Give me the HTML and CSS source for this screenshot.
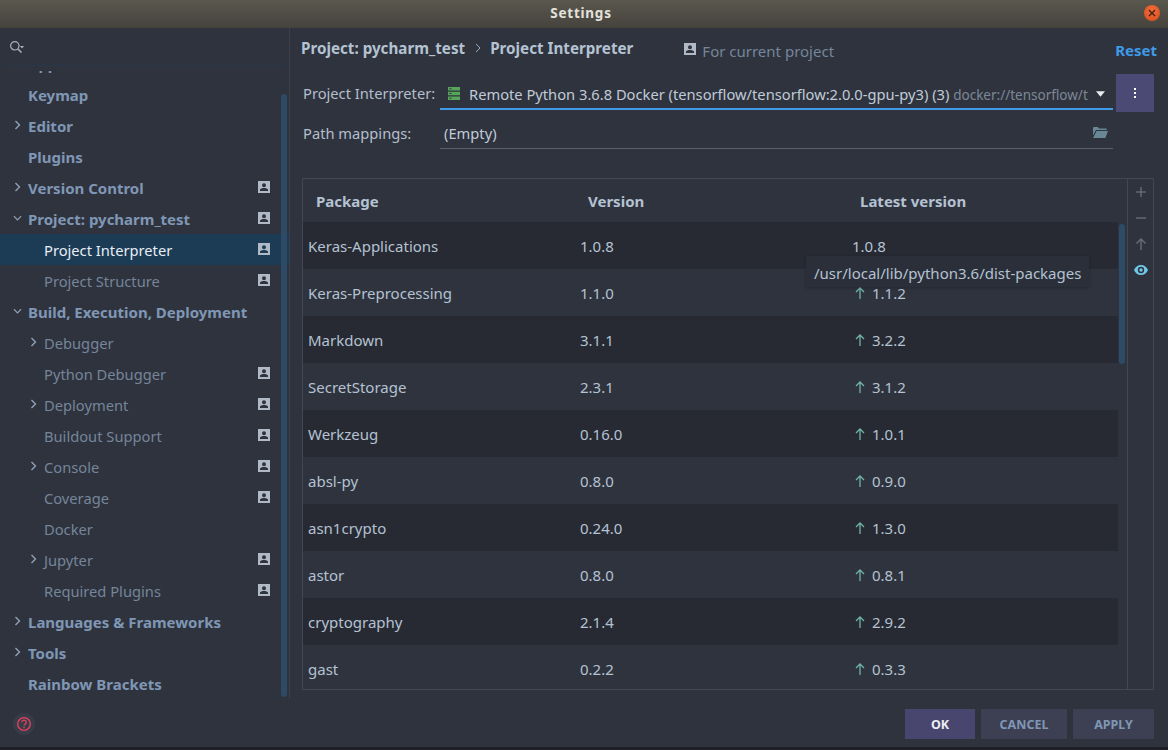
FILE: index.html
```html
<!DOCTYPE html>
<html lang="en">
<head>
<meta charset="utf-8">
<title>Settings</title>
<link rel="stylesheet" href="styles.css">
</head>
<body>
<div class="window">
  <header class="titlebar">
    <span class="title">Settings</span>
    <span class="close"><svg width="10" height="10" viewBox="0 0 10 10"><path d="M2 2l6 6M8 2l-6 6" stroke="#4a2412" stroke-width="1.5"/></svg></span>
  </header>
  <div class="main">
    <aside class="sidebar">
      <div class="search">
        <svg width="14" height="14" viewBox="0 0 14 14"><circle cx="4.800" cy="4.800" r="4.200" fill="none" stroke="#a9b4c2" stroke-width="1.200"/><path d="M8 8l3.500 3.500" stroke="#a9b4c2" stroke-width="1.500"/><path d="M10 5h4l-2 2.400z" fill="#a9b4c2"/></svg>
      </div>
      <div class="tree-wrap">
        <div class="tree">
          <div class="node top clipped">Appearance &amp; Behavior</div>
          <div class="node top">Keymap</div>
          <div class="node top"><svg class="chev" viewBox="0 0 8 10"><path d="M2 1l4 4-4 4" /></svg>Editor</div>
          <div class="node top">Plugins</div>
          <div class="node top"><svg class="chev" viewBox="0 0 8 10"><path d="M2 1l4 4-4 4" /></svg>Version Control<svg class="badge" viewBox="0 0 12 12"><path fill-rule="evenodd" d="M0 0h12v12H0zM6 2.200a2 2 0 1 0 0 4 2 2 0 0 0 0-4zM2 10h8V8.600C10 7.600 7.500 7 6 7s-4 .6-4 1.600z"/></svg></div>
          <div class="node top"><svg class="chev" viewBox="0 0 10 8"><path d="M1 2l4 4 4-4" /></svg>Project: pycharm_test<svg class="badge" viewBox="0 0 12 12"><path fill-rule="evenodd" d="M0 0h12v12H0zM6 2.200a2 2 0 1 0 0 4 2 2 0 0 0 0-4zM2 10h8V8.600C10 7.600 7.500 7 6 7s-4 .6-4 1.600z"/></svg></div>
          <div class="node sub selected">Project Interpreter<svg class="badge" viewBox="0 0 12 12"><path fill-rule="evenodd" d="M0 0h12v12H0zM6 2.200a2 2 0 1 0 0 4 2 2 0 0 0 0-4zM2 10h8V8.600C10 7.600 7.500 7 6 7s-4 .6-4 1.600z"/></svg></div>
          <div class="node sub">Project Structure<svg class="badge" viewBox="0 0 12 12"><path fill-rule="evenodd" d="M0 0h12v12H0zM6 2.200a2 2 0 1 0 0 4 2 2 0 0 0 0-4zM2 10h8V8.600C10 7.600 7.500 7 6 7s-4 .6-4 1.600z"/></svg></div>
          <div class="node top"><svg class="chev" viewBox="0 0 10 8"><path d="M1 2l4 4 4-4" /></svg>Build, Execution, Deployment</div>
          <div class="node sub"><svg class="chev" viewBox="0 0 8 10"><path d="M2 1l4 4-4 4" /></svg>Debugger</div>
          <div class="node sub">Python Debugger<svg class="badge" viewBox="0 0 12 12"><path fill-rule="evenodd" d="M0 0h12v12H0zM6 2.200a2 2 0 1 0 0 4 2 2 0 0 0 0-4zM2 10h8V8.600C10 7.600 7.500 7 6 7s-4 .6-4 1.600z"/></svg></div>
          <div class="node sub"><svg class="chev" viewBox="0 0 8 10"><path d="M2 1l4 4-4 4" /></svg>Deployment<svg class="badge" viewBox="0 0 12 12"><path fill-rule="evenodd" d="M0 0h12v12H0zM6 2.200a2 2 0 1 0 0 4 2 2 0 0 0 0-4zM2 10h8V8.600C10 7.600 7.500 7 6 7s-4 .6-4 1.600z"/></svg></div>
          <div class="node sub">Buildout Support<svg class="badge" viewBox="0 0 12 12"><path fill-rule="evenodd" d="M0 0h12v12H0zM6 2.200a2 2 0 1 0 0 4 2 2 0 0 0 0-4zM2 10h8V8.600C10 7.600 7.500 7 6 7s-4 .6-4 1.600z"/></svg></div>
          <div class="node sub"><svg class="chev" viewBox="0 0 8 10"><path d="M2 1l4 4-4 4" /></svg>Console<svg class="badge" viewBox="0 0 12 12"><path fill-rule="evenodd" d="M0 0h12v12H0zM6 2.200a2 2 0 1 0 0 4 2 2 0 0 0 0-4zM2 10h8V8.600C10 7.600 7.500 7 6 7s-4 .6-4 1.600z"/></svg></div>
          <div class="node sub">Coverage<svg class="badge" viewBox="0 0 12 12"><path fill-rule="evenodd" d="M0 0h12v12H0zM6 2.200a2 2 0 1 0 0 4 2 2 0 0 0 0-4zM2 10h8V8.600C10 7.600 7.500 7 6 7s-4 .6-4 1.600z"/></svg></div>
          <div class="node sub">Docker</div>
          <div class="node sub"><svg class="chev" viewBox="0 0 8 10"><path d="M2 1l4 4-4 4" /></svg>Jupyter<svg class="badge" viewBox="0 0 12 12"><path fill-rule="evenodd" d="M0 0h12v12H0zM6 2.200a2 2 0 1 0 0 4 2 2 0 0 0 0-4zM2 10h8V8.600C10 7.600 7.500 7 6 7s-4 .6-4 1.600z"/></svg></div>
          <div class="node sub">Required Plugins<svg class="badge" viewBox="0 0 12 12"><path fill-rule="evenodd" d="M0 0h12v12H0zM6 2.200a2 2 0 1 0 0 4 2 2 0 0 0 0-4zM2 10h8V8.600C10 7.600 7.500 7 6 7s-4 .6-4 1.600z"/></svg></div>
          <div class="node top"><svg class="chev" viewBox="0 0 8 10"><path d="M2 1l4 4-4 4" /></svg>Languages &amp; Frameworks</div>
          <div class="node top"><svg class="chev" viewBox="0 0 8 10"><path d="M2 1l4 4-4 4" /></svg>Tools</div>
          <div class="node top">Rainbow Brackets</div>
        </div>
        <div class="side-thumb"></div>
      </div>
    </aside>
    <section class="content">
      <div class="crumbs">
        <span class="crumb">Project: pycharm_test</span>
        <svg class="crumb-sep" viewBox="0 0 6 10"><path d="M1 1l4 4-4 4"/></svg>
        <span class="crumb">Project Interpreter</span>
        <span class="scope"><svg class="scope-ico" viewBox="0 0 12 12"><path fill-rule="evenodd" d="M0 0h12v12H0zM6 2.200a2 2 0 1 0 0 4 2 2 0 0 0 0-4zM2 10h8V8.600C10 7.600 7.500 7 6 7s-4 .6-4 1.600z"/></svg>For current project</span>
        <span class="reset">Reset</span>
      </div>
      <div class="form-row first">
        <label class="lbl">Project Interpreter:</label>
        <div class="combo focused">
          <svg class="server" viewBox="0 0 12 13"><path fill="#57a55a" d="M0 0h12v3.400H0zM0 4.800h12v3.400H0zM0 9.600h12V13H0z"/><path fill="#2f343f" d="M1.500 1.200h2v1h-2zM1.500 6h2v1h-2zM1.500 10.800h2v1h-2z"/></svg>
          <span class="combo-text">Remote Python 3.6.8 Docker (tensorflow/tensorflow:2.0.0-gpu-py3) (3) <span class="muted">docker://tensorflow/tensorflow:2.0.0-gpu-py3</span></span>
          <svg class="caret" viewBox="0 0 10 6"><path d="M0 0h10L5 6z"/></svg>
        </div>
        <button class="more"><svg width="4" height="12" viewBox="0 0 4 12"><path fill="#fff" d="M1 1h2v2H1zM1 5h2v2H1zM1 9h2v2H1z"/></svg></button>
      </div>
      <div class="form-row second">
        <label class="lbl">Path mappings:</label>
        <div class="combo">
          <span class="combo-text">(Empty)</span>
          <svg class="folder" viewBox="0 0 15 11"><path fill="#6a8795" d="M0 1.200C0 .5.500 0 1.200 0h3.600l1.400 1.500h6.600c.6 0 1 .4 1 1V3H3L0 8.500z"/><path fill="#6a8795" d="M3.600 4H15l-2.600 7H0z"/></svg>
        </div>
      </div>
      <div class="table-box">
        <div class="table">
          <div class="thead"><span class="c1">Package</span><span class="c2">Version</span><span class="c3">Latest version</span></div>
          <div class="rows">
            <div class="row dark"><span class="c1">Keras-Applications</span><span class="c2">1.0.8</span><span class="c3">1.0.8</span></div>
            <div class="row"><span class="c1">Keras-Preprocessing</span><span class="c2">1.1.0</span><span class="c3"><svg class="up" viewBox="0 0 10 12"><path d="M5 12V1M1 5l4-4 4 4"/></svg>1.1.2</span></div>
            <div class="row dark"><span class="c1">Markdown</span><span class="c2">3.1.1</span><span class="c3"><svg class="up" viewBox="0 0 10 12"><path d="M5 12V1M1 5l4-4 4 4"/></svg>3.2.2</span></div>
            <div class="row"><span class="c1">SecretStorage</span><span class="c2">2.3.1</span><span class="c3"><svg class="up" viewBox="0 0 10 12"><path d="M5 12V1M1 5l4-4 4 4"/></svg>3.1.2</span></div>
            <div class="row dark"><span class="c1">Werkzeug</span><span class="c2">0.16.0</span><span class="c3"><svg class="up" viewBox="0 0 10 12"><path d="M5 12V1M1 5l4-4 4 4"/></svg>1.0.1</span></div>
            <div class="row"><span class="c1">absl-py</span><span class="c2">0.8.0</span><span class="c3"><svg class="up" viewBox="0 0 10 12"><path d="M5 12V1M1 5l4-4 4 4"/></svg>0.9.0</span></div>
            <div class="row dark"><span class="c1">asn1crypto</span><span class="c2">0.24.0</span><span class="c3"><svg class="up" viewBox="0 0 10 12"><path d="M5 12V1M1 5l4-4 4 4"/></svg>1.3.0</span></div>
            <div class="row"><span class="c1">astor</span><span class="c2">0.8.0</span><span class="c3"><svg class="up" viewBox="0 0 10 12"><path d="M5 12V1M1 5l4-4 4 4"/></svg>0.8.1</span></div>
            <div class="row dark"><span class="c1">cryptography</span><span class="c2">2.1.4</span><span class="c3"><svg class="up" viewBox="0 0 10 12"><path d="M5 12V1M1 5l4-4 4 4"/></svg>2.9.2</span></div>
            <div class="row"><span class="c1">gast</span><span class="c2">0.2.2</span><span class="c3"><svg class="up" viewBox="0 0 10 12"><path d="M5 12V1M1 5l4-4 4 4"/></svg>0.3.3</span></div>
          </div>
          <div class="thumb"></div>
          <div class="tooltip">/usr/local/lib/python3.6/dist-packages</div>
        </div>
        <div class="tools">
          <svg class="tool" viewBox="0 0 12 12"><path d="M6 1v10M1 6h10"/></svg>
          <svg class="tool" viewBox="0 0 12 12"><path d="M1 6h10"/></svg>
          <svg class="tool" viewBox="0 0 12 12"><path d="M6 12V1M1.500 5.500L6 1l4.500 4.500"/></svg>
          <svg class="tool eye" viewBox="0 0 14 10"><path fill-rule="evenodd" d="M7 0c3.200 0 5.800 2 7 5-1.200 3-3.800 5-7 5S1.200 8 0 5c1.200-3 3.800-5 7-5zm0 1.800a3.200 3.200 0 1 0 0 6.400 3.200 3.200 0 0 0 0-6.400z"/><circle cx="7" cy="5" r="1.700"/></svg>
        </div>
      </div>
    </section>
  </div>
  <footer class="footer">
    <span class="help"><svg width="16" height="16" viewBox="0 0 16 16"><circle cx="8" cy="8" r="6.300" fill="none" stroke="#e8415f" stroke-width="1.300"/><path d="M5.800 6.300a2.200 2.200 0 1 1 3.300 1.900c-.8.500-1.100.9-1.100 1.600" fill="none" stroke="#e8415f" stroke-width="1.300"/><path d="M7.300 10.800h1.400v1.400H7.300z" fill="#e8415f"/></svg></span>
    <button class="btn primary">OK</button>
    <button class="btn wide">CANCEL</button>
    <button class="btn">APPLY</button>
  </footer>
</div>
</body>
</html>
```
FILE: styles.css
```css
* { box-sizing: border-box; }
html, body { margin: 0; padding: 0; }
body { width: 1168px; height: 750px; overflow: hidden; background: #1d1f25; font-family: "Noto Sans", sans-serif; font-size: 15px; color: #b4bfcd; }
.window { width: 1168px; height: 747px; background: #2f333e; display: flex; flex-direction: column; }
.titlebar { height: 28px; flex: none; background: linear-gradient(#5a574e, #45433d); display: flex; align-items: center; justify-content: center; position: relative; padding: 0 6px 2px 0; }
.title { font-weight: 700; font-size: 13.500px; color: #e4e2dc; letter-spacing: 0.75px; }
.close { position: absolute; left: 1144px; top: 5px; width: 16px; height: 16px; border-radius: 50%; background: radial-gradient(circle at 50% 35%, #f0703a, #d9481a); display: flex; align-items: center; justify-content: center; }
.main { flex: none; height: 671px; display: flex; }
.sidebar { width: 290px; flex: none; border-right: 1px solid #3b404c; height: 671px; display: flex; flex-direction: column; }
.search { height: 38px; margin: 0 5px; padding: 13px 0 0 5px; border-bottom: 1px solid #26384a; flex: none; }
.search svg { display: block; }
.tree-wrap { position: relative; flex: 1; overflow: hidden; margin-top: 5px; }
.tree { margin-top: -23px; }
.node { height: 31px; display: flex; align-items: center; position: relative; white-space: nowrap; font-size: 14.700px; }
.node.top { padding-left: 28px; font-weight: 700; font-size: 15px; color: #7f97b5; }
.node.sub { padding-left: 44px; color: #75859a; }
.node.selected { background: #1c3b54; color: #e8eef4; }
.chev { position: absolute; left: 13px; top: 10px; width: 9px; height: 10px; fill: none; stroke: #93a4ba; stroke-width: 1.300; }
.sub .chev { left: 29px; }
.badge { position: absolute; left: 258px; top: 9px; width: 12px; height: 12px; fill: #b0bac6; }
.side-thumb { position: absolute; left: 281px; top: 23px; width: 6px; bottom: 2px; background: #2d4a66; border-radius: 3px; }
.content { flex: 1; min-width: 0; padding: 0 14px 0 11px; display: flex; flex-direction: column; }
.crumbs { height: 48px; flex: none; display: flex; align-items: center; position: relative; padding-bottom: 8px; }
.crumb { font-weight: 700; font-size: 15.200px; color: #b4c2d2; }
.crumb-sep { width: 6px; height: 10px; margin: 0 9px 0 10px; fill: none; stroke: #a0abba; stroke-width: 1; }
.scope { margin-left: 51px; display: flex; align-items: center; color: #75859a; font-size: 15px; position: relative; top: 3px; }
.scope-ico { width: 12px; height: 12px; fill: #b0bac6; margin-right: 6px; position: relative; top: -2px; }
.reset { position: absolute; right: -3px; top: 12px; color: #3f9ae8; font-weight: 700; font-size: 15px; }
.form-row { display: flex; align-items: stretch; flex: none; }
.form-row.first { height: 34px; }
.form-row.second { height: 39px; }
.lbl { width: 139px; padding-left: 2px; flex: none; color: #b4bfcd; font-size: 14.700px; display: flex; align-items: center; }
.second .lbl { padding-top: 7px; }
.combo { width: 673px; flex: none; display: flex; align-items: center; padding: 3px 0 0 4px; border-bottom: 1px solid #5a5f6a; position: relative; overflow: hidden; white-space: nowrap; }
.second .combo { padding-top: 8px; }
.combo.focused { border-bottom: 2px solid #3f9ae8; }
.server { width: 12px; height: 13px; margin: 0 9px 0 4px; flex: none; }
.combo-text { color: #c0cbd8; font-size: 14.700px; overflow: hidden; }
.focused .combo-text { width: 619px; flex: none; }
.muted { color: #7d8896; font-size: 13.500px; }
.caret { position: absolute; right: 8px; top: 15px; width: 9px; height: 6px; fill: #e8ebef; }
.folder { position: absolute; right: 5px; top: 17px; width: 15px; height: 11px; }
.more { width: 38px; height: 38px; margin: -2px 0 0 3px; border: 0; padding: 0; background: #4b4a74; display: flex; align-items: center; justify-content: center; }
.table-box { margin: 29px 0 0 1px; height: 512px; flex: none; border: 1px solid #424751; display: flex; }
.table { flex: 1; position: relative; overflow: hidden; min-width: 0; }
.thead { height: 43px; display: flex; align-items: center; font-weight: 700; color: #b4c2d2; font-size: 15px; }
.thead .c1 { width: 285px; padding-left: 13px; }
.thead .c2 { width: 272px; }
.rows { margin-right: 9px; }
.row { height: 47px; display: flex; align-items: center; color: #b4c2d2; font-size: 15px; }
.row.dark { background: #272a33; }
.row .c1 { width: 277px; padding-left: 5px; }
.row .c2 { width: 272px; }
.c3 { display: flex; align-items: center; }
.up { width: 10px; height: 12px; margin: 0 7px 0 3px; fill: none; stroke: #6fb3a8; stroke-width: 1.300; }
.thumb { position: absolute; right: 2px; top: 45px; width: 6px; height: 140px; background: #2d4a66; border-radius: 3px; }
.tooltip { position: absolute; left: 503px; top: 77px; height: 31px; padding: 3px 8px 0; background: #2b2f39; color: #b4c2d2; display: flex; align-items: center; box-shadow: 0 1px 3px rgba(0,0,0,.25); font-size: 15px; white-space: nowrap; }
.tools { width: 26px; flex: none; border-left: 1px solid #424751; display: flex; flex-direction: column; align-items: center; padding-top: 7px; gap: 14px; }
.tool { width: 12px; height: 12px; fill: none; stroke: #626a77; stroke-width: 1.500; }
.eye { width: 14px; height: 10px; margin-top: 1px; stroke: none; fill: #70c8e8; }
.footer { flex: 1; display: flex; align-items: flex-start; padding: 10px 14px 0 13px; }
.help { margin-right: auto; width: 22px; height: 22px; margin-top: 4px; border-radius: 50%; background: #383c49; display: flex; align-items: center; justify-content: center; }
.btn { height: 30px; border: 0; padding: 0; background: #3d4052; color: #7f97b5; font-family: inherit; font-weight: 700; font-size: 12.500px; width: 81px; margin-left: 6px; }
.btn.wide { width: 86px; }
.btn.primary { width: 70px; background: #48456f; color: #eceef2; }
```
